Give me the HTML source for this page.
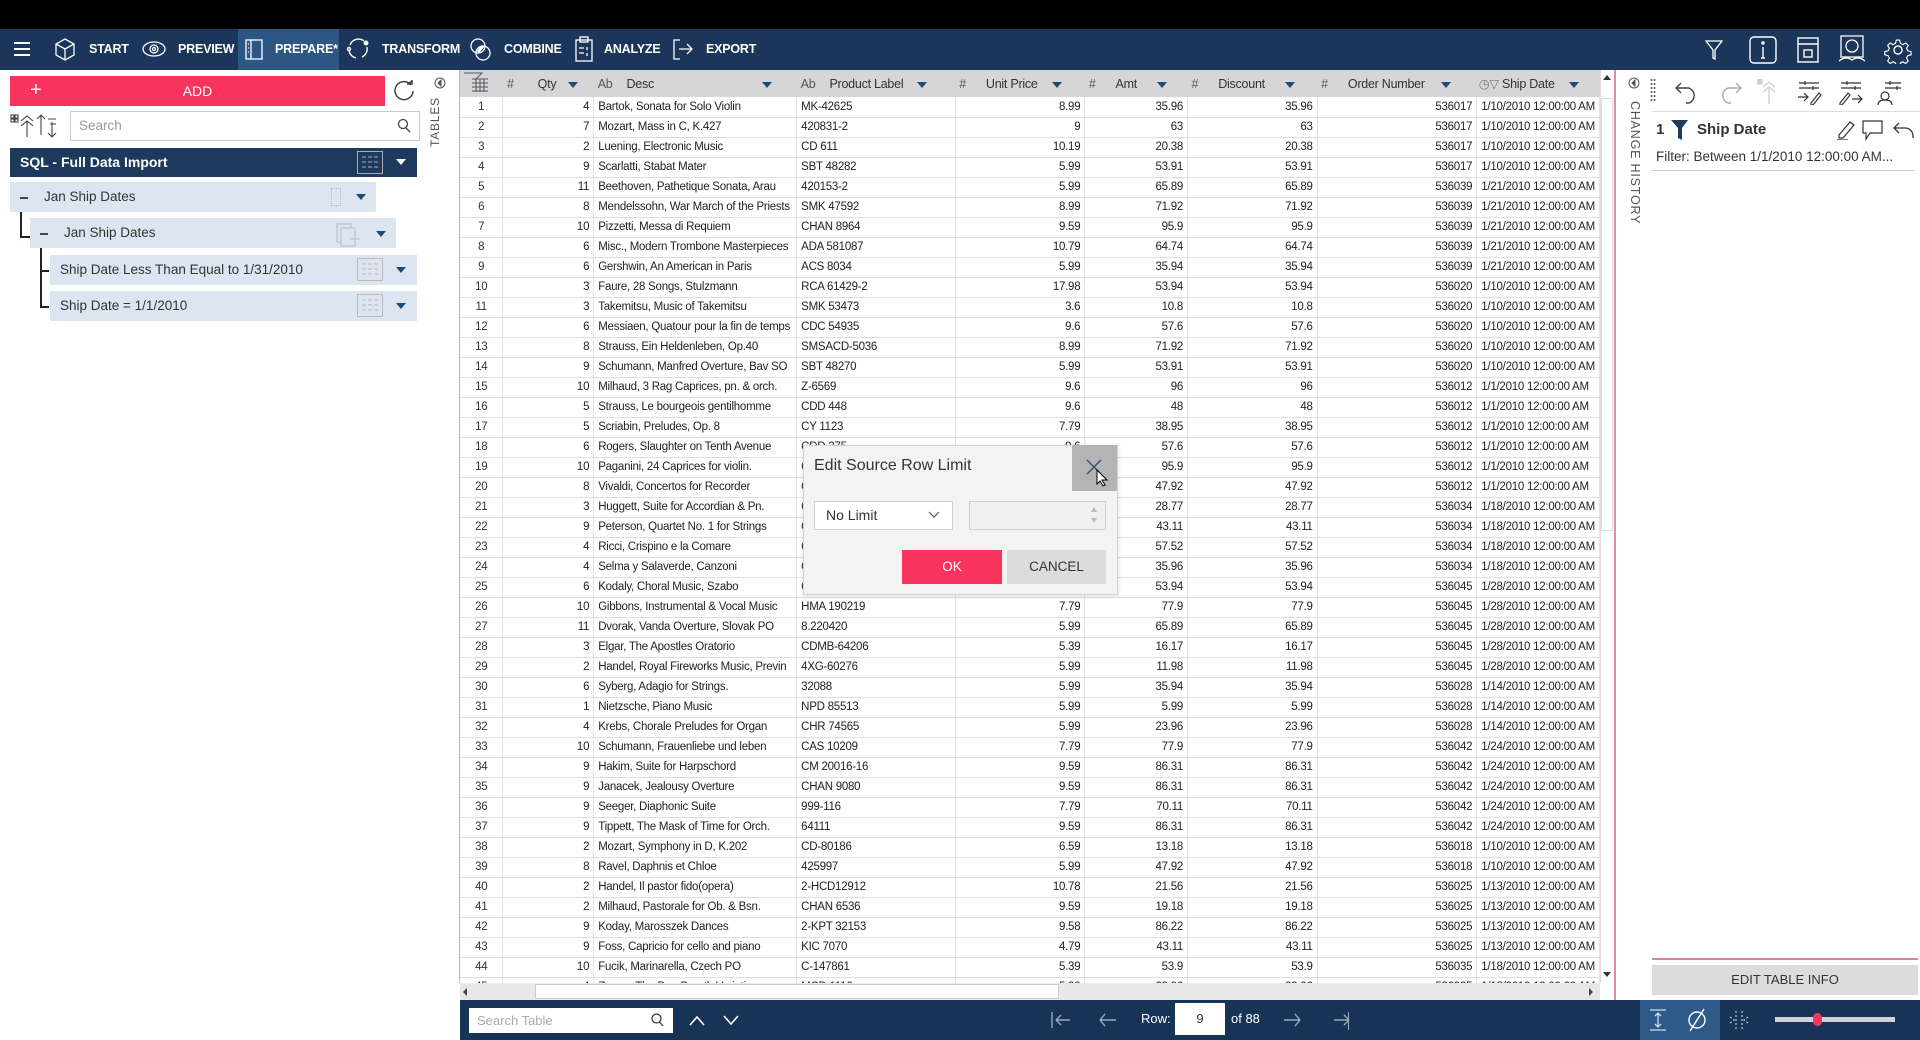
<!DOCTYPE html>
<html><head><meta charset="utf-8">
<style>
*{box-sizing:border-box;margin:0;padding:0}
body{width:1920px;height:1040px;overflow:hidden;background:#fff;font-family:"Liberation Sans",sans-serif;position:relative;color:#333}
.abs{position:absolute}
#top{left:0;top:0;width:1920px;height:29px;background:#000}
#nav{left:0;top:29px;width:1920px;height:41px;background:#1b365a;color:#fff}
.nv{position:absolute;top:0;height:41px;line-height:41px;font-size:12.5px;font-weight:bold;letter-spacing:-0.2px}
.nav-ic{position:absolute;top:9px}
#grid{left:459px;top:70px;width:1141px;height:913px;overflow:hidden;border-left:1px solid #e9a0b4}
table{border-collapse:collapse;table-layout:fixed;font-size:11.5px;letter-spacing:-0.25px;color:#222}
td{height:20px;border-bottom:1px solid #dedede;border-right:1px solid #e3e3e3;white-space:nowrap;overflow:hidden;padding:0 4px}
td.r{text-align:right}
td.c{text-align:center;color:#333}
thead td{height:23px;background:#d6d6d6;color:#333;font-size:12.5px;border-right:none;border-bottom:none}
.tri{display:inline-block;width:0;height:0;border-left:5px solid transparent;border-right:5px solid transparent;border-top:6px solid #1b4b7a}
.panel{position:absolute;background:#dde6f0;height:30px;line-height:30px;font-size:13.5px;color:#333}
</style></head><body>
<div id="top" class="abs"></div>
<div id="nav" class="abs">
  <svg class="nav-ic" style="left:14px;top:13px" width="16" height="15"><path d="M0 1h16M0 7h16M0 13h16" stroke="#fff" stroke-width="2"/></svg>
  <svg class="nav-ic" style="left:55px" width="20" height="23" fill="none" stroke="#fff" stroke-width="1.3"><path d="M10 1L19 6V17L10 22L1 17V6Z M1 6L10 11L19 6 M10 11V22"/></svg>
  <div class="nv" style="left:89px">START</div>
  <svg class="nav-ic" style="left:142px;top:11px" width="24" height="18" fill="none" stroke="#fff" stroke-width="1.3"><ellipse cx="12" cy="9" rx="11" ry="7"/><circle cx="12" cy="9" r="4"/><circle cx="12" cy="9" r="1.5"/></svg>
  <div class="nv" style="left:178px">PREVIEW</div>
  <div class="abs" style="left:238px;top:0;width:101px;height:41px;background:#2c5785"></div>
  <svg class="nav-ic" style="left:245px;top:10px" width="18" height="21" fill="none" stroke="#fff" stroke-width="1.3"><rect x="1" y="1" width="16" height="19"/><path d="M6 1V20M3 5h1M3 9h1M3 13h1"/></svg>
  <div class="nv" style="left:275px">PREPARE*</div>
  <svg class="nav-ic" style="left:346px;top:8px" width="24" height="24" fill="none" stroke="#fff" stroke-width="1.4"><path d="M4 8A9 9 0 0 1 18 4M21 10A9 9 0 0 1 16 20M10 21A9 9 0 0 1 3 14"/><circle cx="20" cy="6" r="1.8" fill="#fff"/><circle cx="3" cy="12" r="1.5"/></svg>
  <div class="nv" style="left:382px">TRANSFORM</div>
  <svg class="nav-ic" style="left:469px;top:8px" width="24" height="26" fill="none" stroke="#fff" stroke-width="1.3"><circle cx="9" cy="9" r="7"/><circle cx="14" cy="16" r="7"/><path d="M9 15L14 9" stroke-width="3"/></svg>
  <div class="nv" style="left:504px">COMBINE</div>
  <svg class="nav-ic" style="left:575px;top:7px" width="18" height="26" fill="none" stroke="#fff" stroke-width="1.3"><rect x="1" y="4" width="16" height="21"/><rect x="5" y="1" width="8" height="5"/><path d="M4 12h5M4 17h5M12 11v3M12 17v3"/></svg>
  <div class="nv" style="left:604px">ANALYZE</div>
  <svg class="nav-ic" style="left:673px;top:10px" width="20" height="21" fill="none" stroke="#fff" stroke-width="1.3"><path d="M7 1H1V20H7M6 10H19M14 5L19 10L14 15"/></svg>
  <div class="nv" style="left:706px">EXPORT</div>
  <svg class="nav-ic" style="left:1705px;top:11px" width="18" height="20" fill="none" stroke="#fff" stroke-width="1.3"><path d="M1 1H17L10 10V19L8 18V10Z"/></svg>
  <svg class="nav-ic" style="left:1749px;top:7px" width="28" height="28" fill="none" stroke="#fff" stroke-width="1.4"><rect x="1" y="1" width="26" height="26" rx="4"/><path d="M14 11V22M12 22h4"/><circle cx="14" cy="7" r="1" fill="#fff"/></svg>
  <svg class="nav-ic" style="left:1797px;top:8px" width="22" height="26" fill="none" stroke="#fff" stroke-width="1.4"><rect x="1" y="1" width="20" height="24"/><path d="M1 7H21"/><rect x="7" y="13" width="8" height="7"/></svg>
  <svg class="nav-ic" style="left:1838px;top:6px" width="28" height="28" fill="none" stroke="#fff" stroke-width="1.3"><path d="M3 1H25V22H3Z M1 26C6 22 10 22 14 25C18 22 22 22 27 26"/><circle cx="14" cy="11" r="6"/></svg>
  <svg class="nav-ic" style="left:1884px;top:7px" width="28" height="28" fill="none" stroke="#fff" stroke-width="1.4"><circle cx="14" cy="14" r="4"/><path d="M12 2h4l1 4 3 1.5 3.5-2 3 3-2 3.5 1.5 3 4 1v4l-4 1-1.5 3 2 3.5-3 3-3.5-2-3 1.5-1 4h-4l-1-4-3-1.5-3.5 2-3-3 2-3.5-1.5-3-4-1v-4l4-1 1.5-3-2-3.5 3-3 3.5 2 3-1.5z" transform="scale(0.82) translate(3 3)"/></svg>
</div>

<!-- LEFT PANEL -->
<div class="abs" style="left:10px;top:76px;width:375px;height:30px;background:#f8345e;color:#fff;font-size:14px;line-height:30px;text-align:center">ADD</div>
<div class="abs" style="left:30px;top:80px;color:#fff;font-size:20px;font-weight:200;line-height:20px">+</div>
<svg class="abs" style="left:392px;top:79px" width="24" height="24" fill="none" stroke="#444" stroke-width="1.5"><path d="M19 6A9 9 0 1 0 21 12"/><path d="M15 5L20 5L20 1" fill="#444"/></svg>
<svg class="abs" style="left:434px;top:77px" width="12" height="12" fill="none" stroke="#555"><circle cx="6" cy="6" r="5"/><path d="M7 3L4 6L7 9Z" fill="#555"/></svg>
<div class="abs" style="left:428px;top:147px;transform:rotate(-90deg);transform-origin:left top;font-size:12px;color:#555;letter-spacing:0.8px">TABLES</div>
<svg class="abs" style="left:10px;top:113px" width="56" height="26" fill="none" stroke="#444" stroke-width="1.1"><rect x="1" y="2" width="3" height="3"/><rect x="5" y="2" width="3" height="3"/><rect x="1" y="6" width="3" height="3"/><rect x="5" y="6" width="3" height="3"/><path d="M11 8L17 3L23 8M11 13L17 8L23 13M17 8V24M31 2V22M27 6L31 2L35 6M38 6H46M40 11H46M42 9V24M38 20L42 24L46 20"/></svg>
<div class="abs" style="left:70px;top:111px;width:350px;height:30px;border:1px solid #ccc;background:#fff;font-size:13.5px;color:#999;line-height:28px;padding-left:8px">Search</div>
<svg class="abs" style="left:397px;top:118px" width="14" height="15" fill="none" stroke="#444" stroke-width="1.3"><circle cx="6" cy="6" r="4.5"/><path d="M9 10L13 14"/></svg>
<div class="abs" style="left:10px;top:148px;width:407px;height:29px;background:#1d3a5d;color:#fff;font-weight:bold;font-size:14px;line-height:29px;padding-left:10px">SQL - Full Data Import</div>
<svg class="abs" style="left:357px;top:151px" width="26" height="23" fill="none" stroke="#aab" stroke-width="1"><rect x="0.5" y="0.5" width="25" height="22"/><path d="M5 6h4M11 6h4M17 6h4M5 11h4M11 11h4M17 11h4M5 16h4M11 16h4M17 16h4"/></svg>
<div class="abs tri" style="left:396px;top:159px;border-top-color:#fff"></div>

<div class="panel" style="left:10px;top:182px;width:366px;padding-left:34px">Jan Ship Dates</div>
<div class="abs" style="left:20px;top:197px;width:8px;height:1.5px;background:#444"></div>
<div class="abs" style="left:331px;top:188px;width:10px;height:18px;border:1px dotted #bbb"></div>
<div class="abs tri" style="left:356px;top:194px"></div>
<div class="abs" style="left:20px;top:212px;width:1.5px;height:25px;background:#222"></div>
<div class="abs" style="left:20px;top:236px;width:10px;height:1.5px;background:#222"></div>
<div class="panel" style="left:30px;top:218px;width:366px;padding-left:34px">Jan Ship Dates</div>
<div class="abs" style="left:40px;top:233px;width:8px;height:1.5px;background:#444"></div>
<svg class="abs" style="left:336px;top:223px" width="26" height="26" fill="none" stroke="#bbb" stroke-width="1"><rect x="1" y="1" width="14" height="18"/><rect x="5" y="5" width="14" height="18" fill="#dde6f0"/><path d="M14 16h10M19 11v10"/></svg>
<div class="abs tri" style="left:376px;top:231px"></div>
<div class="abs" style="left:40px;top:248px;width:1.5px;height:59px;background:#222"></div>
<div class="abs" style="left:40px;top:270px;width:9px;height:1.5px;background:#222"></div>
<div class="abs" style="left:40px;top:306px;width:9px;height:1.5px;background:#222"></div>
<div class="panel" style="left:50px;top:255px;width:367px;padding-left:10px">Ship Date Less Than Equal to 1/31/2010</div>
<div class="panel" style="left:50px;top:291px;width:367px;padding-left:10px">Ship Date = 1/1/2010</div>
<svg class="abs" style="left:357px;top:258px" width="26" height="23" fill="none" stroke="#bbb"><rect x="0.5" y="0.5" width="25" height="22"/><path d="M5 6h4M11 6h4M17 6h4M5 11h4M11 11h4M17 11h4M5 16h4M11 16h4M17 16h4"/></svg>
<svg class="abs" style="left:357px;top:294px" width="26" height="23" fill="none" stroke="#bbb"><rect x="0.5" y="0.5" width="25" height="22"/><path d="M5 6h4M11 6h4M17 6h4M5 11h4M11 11h4M17 11h4M5 16h4M11 16h4M17 16h4"/></svg>
<div class="abs tri" style="left:396px;top:267px"></div>
<div class="abs tri" style="left:396px;top:303px"></div>

<!-- GRID -->
<div id="grid" class="abs">
<table>
<colgroup><col style="width:43px"><col style="width:91px"><col style="width:203px"><col style="width:159px"><col style="width:130px"><col style="width:103px"><col style="width:130px"><col style="width:160px"><col style="width:122px"></colgroup>
<thead><tr>
<td style="padding:0"><svg width="40" height="24" fill="none" stroke="#556" stroke-width="1"><path d="M4 3H22L15 10"/><path d="M12 9h16M12 13h16M12 17h16M12 21h16M16 9v13M20 9v13M24 9v13"/></svg></td>
<td><span style="color:#555">#</span><span style="margin-left:24px">Qty</span><span class="tri" style="margin-left:12px"></span></td>
<td><span style="color:#555">Ab</span><span style="margin-left:14px">Desc</span><span class="tri" style="margin-left:108px"></span></td>
<td><span style="color:#555">Ab</span><span style="margin-left:14px">Product Label</span><span class="tri" style="margin-left:14px"></span></td>
<td><span style="color:#555">#</span><span style="margin-left:20px">Unit Price</span><span class="tri" style="margin-left:14px"></span></td>
<td><span style="color:#555">#</span><span style="margin-left:20px">Amt</span><span class="tri" style="margin-left:20px"></span></td>
<td><span style="color:#555">#</span><span style="margin-left:20px">Discount</span><span class="tri" style="margin-left:20px"></span></td>
<td><span style="color:#555">#</span><span style="margin-left:20px">Order Number</span><span class="tri" style="margin-left:16px"></span></td>
<td style="padding-left:2px"><span style="color:#777">&#9719;&#9661;</span> Ship Date<span class="tri" style="margin-left:14px"></span></td>
</tr></thead>
<tbody>
<tr><td class="c">1</td><td class="r">4</td><td>Bartok, Sonata for Solo Violin</td><td>MK-42625</td><td class="r">8.99</td><td class="r">35.96</td><td class="r">35.96</td><td class="r">536017</td><td>1/10/2010 12:00:00 AM</td></tr>
<tr><td class="c">2</td><td class="r">7</td><td>Mozart, Mass in C, K.427</td><td>420831-2</td><td class="r">9</td><td class="r">63</td><td class="r">63</td><td class="r">536017</td><td>1/10/2010 12:00:00 AM</td></tr>
<tr><td class="c">3</td><td class="r">2</td><td>Luening, Electronic Music</td><td>CD 611</td><td class="r">10.19</td><td class="r">20.38</td><td class="r">20.38</td><td class="r">536017</td><td>1/10/2010 12:00:00 AM</td></tr>
<tr><td class="c">4</td><td class="r">9</td><td>Scarlatti, Stabat Mater</td><td>SBT 48282</td><td class="r">5.99</td><td class="r">53.91</td><td class="r">53.91</td><td class="r">536017</td><td>1/10/2010 12:00:00 AM</td></tr>
<tr><td class="c">5</td><td class="r">11</td><td>Beethoven, Pathetique Sonata, Arau</td><td>420153-2</td><td class="r">5.99</td><td class="r">65.89</td><td class="r">65.89</td><td class="r">536039</td><td>1/21/2010 12:00:00 AM</td></tr>
<tr><td class="c">6</td><td class="r">8</td><td>Mendelssohn, War March of the Priests</td><td>SMK 47592</td><td class="r">8.99</td><td class="r">71.92</td><td class="r">71.92</td><td class="r">536039</td><td>1/21/2010 12:00:00 AM</td></tr>
<tr><td class="c">7</td><td class="r">10</td><td>Pizzetti, Messa di Requiem</td><td>CHAN 8964</td><td class="r">9.59</td><td class="r">95.9</td><td class="r">95.9</td><td class="r">536039</td><td>1/21/2010 12:00:00 AM</td></tr>
<tr><td class="c">8</td><td class="r">6</td><td>Misc., Modern Trombone Masterpieces</td><td>ADA 581087</td><td class="r">10.79</td><td class="r">64.74</td><td class="r">64.74</td><td class="r">536039</td><td>1/21/2010 12:00:00 AM</td></tr>
<tr><td class="c">9</td><td class="r">6</td><td>Gershwin, An American in Paris</td><td>ACS 8034</td><td class="r">5.99</td><td class="r">35.94</td><td class="r">35.94</td><td class="r">536039</td><td>1/21/2010 12:00:00 AM</td></tr>
<tr><td class="c">10</td><td class="r">3</td><td>Faure, 28 Songs, Stulzmann</td><td>RCA 61429-2</td><td class="r">17.98</td><td class="r">53.94</td><td class="r">53.94</td><td class="r">536020</td><td>1/10/2010 12:00:00 AM</td></tr>
<tr><td class="c">11</td><td class="r">3</td><td>Takemitsu, Music of Takemitsu</td><td>SMK 53473</td><td class="r">3.6</td><td class="r">10.8</td><td class="r">10.8</td><td class="r">536020</td><td>1/10/2010 12:00:00 AM</td></tr>
<tr><td class="c">12</td><td class="r">6</td><td>Messiaen, Quatour pour la fin de temps</td><td>CDC 54935</td><td class="r">9.6</td><td class="r">57.6</td><td class="r">57.6</td><td class="r">536020</td><td>1/10/2010 12:00:00 AM</td></tr>
<tr><td class="c">13</td><td class="r">8</td><td>Strauss, Ein Heldenleben, Op.40</td><td>SMSACD-5036</td><td class="r">8.99</td><td class="r">71.92</td><td class="r">71.92</td><td class="r">536020</td><td>1/10/2010 12:00:00 AM</td></tr>
<tr><td class="c">14</td><td class="r">9</td><td>Schumann, Manfred Overture, Bav SO</td><td>SBT 48270</td><td class="r">5.99</td><td class="r">53.91</td><td class="r">53.91</td><td class="r">536020</td><td>1/10/2010 12:00:00 AM</td></tr>
<tr><td class="c">15</td><td class="r">10</td><td>Milhaud, 3 Rag Caprices, pn. &amp; orch.</td><td>Z-6569</td><td class="r">9.6</td><td class="r">96</td><td class="r">96</td><td class="r">536012</td><td>1/1/2010 12:00:00 AM</td></tr>
<tr><td class="c">16</td><td class="r">5</td><td>Strauss, Le bourgeois gentilhomme</td><td>CDD 448</td><td class="r">9.6</td><td class="r">48</td><td class="r">48</td><td class="r">536012</td><td>1/1/2010 12:00:00 AM</td></tr>
<tr><td class="c">17</td><td class="r">5</td><td>Scriabin, Preludes, Op. 8</td><td>CY 1123</td><td class="r">7.79</td><td class="r">38.95</td><td class="r">38.95</td><td class="r">536012</td><td>1/1/2010 12:00:00 AM</td></tr>
<tr><td class="c">18</td><td class="r">6</td><td>Rogers, Slaughter on Tenth Avenue</td><td>CDD 275</td><td class="r">9.6</td><td class="r">57.6</td><td class="r">57.6</td><td class="r">536012</td><td>1/1/2010 12:00:00 AM</td></tr>
<tr><td class="c">19</td><td class="r">10</td><td>Paganini, 24 Caprices for violin.</td><td>CDD 276</td><td class="r">9.59</td><td class="r">95.9</td><td class="r">95.9</td><td class="r">536012</td><td>1/1/2010 12:00:00 AM</td></tr>
<tr><td class="c">20</td><td class="r">8</td><td>Vivaldi, Concertos for Recorder</td><td>CDD 277</td><td class="r">5.99</td><td class="r">47.92</td><td class="r">47.92</td><td class="r">536012</td><td>1/1/2010 12:00:00 AM</td></tr>
<tr><td class="c">21</td><td class="r">3</td><td>Huggett, Suite for Accordian &amp; Pn.</td><td>CDD 278</td><td class="r">9.59</td><td class="r">28.77</td><td class="r">28.77</td><td class="r">536034</td><td>1/18/2010 12:00:00 AM</td></tr>
<tr><td class="c">22</td><td class="r">9</td><td>Peterson, Quartet No. 1 for Strings</td><td>CDD 279</td><td class="r">4.79</td><td class="r">43.11</td><td class="r">43.11</td><td class="r">536034</td><td>1/18/2010 12:00:00 AM</td></tr>
<tr><td class="c">23</td><td class="r">4</td><td>Ricci, Crispino e la Comare</td><td>CDD 280</td><td class="r">14.38</td><td class="r">57.52</td><td class="r">57.52</td><td class="r">536034</td><td>1/18/2010 12:00:00 AM</td></tr>
<tr><td class="c">24</td><td class="r">4</td><td>Selma y Salaverde, Canzoni</td><td>CDD 281</td><td class="r">8.99</td><td class="r">35.96</td><td class="r">35.96</td><td class="r">536034</td><td>1/18/2010 12:00:00 AM</td></tr>
<tr><td class="c">25</td><td class="r">6</td><td>Kodaly, Choral Music, Szabo</td><td>CDD 282</td><td class="r">8.99</td><td class="r">53.94</td><td class="r">53.94</td><td class="r">536045</td><td>1/28/2010 12:00:00 AM</td></tr>
<tr><td class="c">26</td><td class="r">10</td><td>Gibbons, Instrumental &amp; Vocal Music</td><td>HMA 190219</td><td class="r">7.79</td><td class="r">77.9</td><td class="r">77.9</td><td class="r">536045</td><td>1/28/2010 12:00:00 AM</td></tr>
<tr><td class="c">27</td><td class="r">11</td><td>Dvorak, Vanda Overture, Slovak PO</td><td>8.220420</td><td class="r">5.99</td><td class="r">65.89</td><td class="r">65.89</td><td class="r">536045</td><td>1/28/2010 12:00:00 AM</td></tr>
<tr><td class="c">28</td><td class="r">3</td><td>Elgar, The Apostles Oratorio</td><td>CDMB-64206</td><td class="r">5.39</td><td class="r">16.17</td><td class="r">16.17</td><td class="r">536045</td><td>1/28/2010 12:00:00 AM</td></tr>
<tr><td class="c">29</td><td class="r">2</td><td>Handel, Royal Fireworks Music, Previn</td><td>4XG-60276</td><td class="r">5.99</td><td class="r">11.98</td><td class="r">11.98</td><td class="r">536045</td><td>1/28/2010 12:00:00 AM</td></tr>
<tr><td class="c">30</td><td class="r">6</td><td>Syberg, Adagio for Strings.</td><td>32088</td><td class="r">5.99</td><td class="r">35.94</td><td class="r">35.94</td><td class="r">536028</td><td>1/14/2010 12:00:00 AM</td></tr>
<tr><td class="c">31</td><td class="r">1</td><td>Nietzsche, Piano Music</td><td>NPD 85513</td><td class="r">5.99</td><td class="r">5.99</td><td class="r">5.99</td><td class="r">536028</td><td>1/14/2010 12:00:00 AM</td></tr>
<tr><td class="c">32</td><td class="r">4</td><td>Krebs, Chorale Preludes for Organ</td><td>CHR 74565</td><td class="r">5.99</td><td class="r">23.96</td><td class="r">23.96</td><td class="r">536028</td><td>1/14/2010 12:00:00 AM</td></tr>
<tr><td class="c">33</td><td class="r">10</td><td>Schumann, Frauenliebe und leben</td><td>CAS 10209</td><td class="r">7.79</td><td class="r">77.9</td><td class="r">77.9</td><td class="r">536042</td><td>1/24/2010 12:00:00 AM</td></tr>
<tr><td class="c">34</td><td class="r">9</td><td>Hakim, Suite for Harpschord</td><td>CM 20016-16</td><td class="r">9.59</td><td class="r">86.31</td><td class="r">86.31</td><td class="r">536042</td><td>1/24/2010 12:00:00 AM</td></tr>
<tr><td class="c">35</td><td class="r">9</td><td>Janacek, Jealousy Overture</td><td>CHAN 9080</td><td class="r">9.59</td><td class="r">86.31</td><td class="r">86.31</td><td class="r">536042</td><td>1/24/2010 12:00:00 AM</td></tr>
<tr><td class="c">36</td><td class="r">9</td><td>Seeger, Diaphonic Suite</td><td>999-116</td><td class="r">7.79</td><td class="r">70.11</td><td class="r">70.11</td><td class="r">536042</td><td>1/24/2010 12:00:00 AM</td></tr>
<tr><td class="c">37</td><td class="r">9</td><td>Tippett, The Mask of Time for Orch.</td><td>64111</td><td class="r">9.59</td><td class="r">86.31</td><td class="r">86.31</td><td class="r">536042</td><td>1/24/2010 12:00:00 AM</td></tr>
<tr><td class="c">38</td><td class="r">2</td><td>Mozart, Symphony in D, K.202</td><td>CD-80186</td><td class="r">6.59</td><td class="r">13.18</td><td class="r">13.18</td><td class="r">536018</td><td>1/10/2010 12:00:00 AM</td></tr>
<tr><td class="c">39</td><td class="r">8</td><td>Ravel, Daphnis et Chloe</td><td>425997</td><td class="r">5.99</td><td class="r">47.92</td><td class="r">47.92</td><td class="r">536018</td><td>1/10/2010 12:00:00 AM</td></tr>
<tr><td class="c">40</td><td class="r">2</td><td>Handel, Il pastor fido(opera)</td><td>2-HCD12912</td><td class="r">10.78</td><td class="r">21.56</td><td class="r">21.56</td><td class="r">536025</td><td>1/13/2010 12:00:00 AM</td></tr>
<tr><td class="c">41</td><td class="r">2</td><td>Milhaud, Pastorale for Ob. &amp; Bsn.</td><td>CHAN 6536</td><td class="r">9.59</td><td class="r">19.18</td><td class="r">19.18</td><td class="r">536025</td><td>1/13/2010 12:00:00 AM</td></tr>
<tr><td class="c">42</td><td class="r">9</td><td>Koday, Marosszek Dances</td><td>2-KPT 32153</td><td class="r">9.58</td><td class="r">86.22</td><td class="r">86.22</td><td class="r">536025</td><td>1/13/2010 12:00:00 AM</td></tr>
<tr><td class="c">43</td><td class="r">9</td><td>Foss, Capricio for cello and piano</td><td>KIC 7070</td><td class="r">4.79</td><td class="r">43.11</td><td class="r">43.11</td><td class="r">536025</td><td>1/13/2010 12:00:00 AM</td></tr>
<tr><td class="c">44</td><td class="r">10</td><td>Fucik, Marinarella, Czech PO</td><td>C-147861</td><td class="r">5.39</td><td class="r">53.9</td><td class="r">53.9</td><td class="r">536035</td><td>1/18/2010 12:00:00 AM</td></tr>
<tr><td class="c">45</td><td class="r">4</td><td>Zappa, The Dog Breath Variations</td><td>MCD 1116</td><td class="r">5.99</td><td class="r">23.96</td><td class="r">23.96</td><td class="r">536035</td><td>1/18/2010 12:00:00 AM</td></tr>
</tbody></table>
</div>
<!-- vertical scrollbar -->
<div class="abs" style="left:1600px;top:70px;width:14px;height:913px;background:#fff;border-left:1px solid #ddd"></div>
<div class="abs" style="left:1603px;top:75px;width:0;height:0;border-left:4px solid transparent;border-right:4px solid transparent;border-bottom:5px solid #333"></div>
<div class="abs" style="left:1601px;top:98px;width:12px;height:433px;background:#fff;border:1px solid #ddd"></div>
<div class="abs" style="left:1603px;top:972px;width:0;height:0;border-left:4px solid transparent;border-right:4px solid transparent;border-top:5px solid #333"></div>
<!-- horizontal scrollbar -->
<div class="abs" style="left:460px;top:983px;width:1140px;height:17px;background:#e8e8e8"></div>
<div class="abs" style="left:535px;top:984px;width:524px;height:15px;background:#fff;border:1px solid #ccc"></div>
<div class="abs" style="left:463px;top:988px;width:0;height:0;border-top:4px solid transparent;border-bottom:4px solid transparent;border-right:4px solid #444"></div>
<div class="abs" style="left:1589px;top:988px;width:0;height:0;border-top:4px solid transparent;border-bottom:4px solid transparent;border-left:4px solid #444"></div>

<!-- RIGHT PANEL -->
<div class="abs" style="left:1614px;top:70px;width:2px;height:930px;background:#e78aa5"></div>
<svg class="abs" style="left:1628px;top:77px" width="12" height="12" fill="none" stroke="#555"><circle cx="6" cy="6" r="5"/><path d="M7 3L4 6L7 9Z" fill="#555"/></svg>
<div class="abs" style="left:1642px;top:101px;transform:rotate(90deg);transform-origin:left top;font-size:12.5px;color:#555;letter-spacing:0.8px;white-space:nowrap">CHANGE HISTORY</div>
<svg class="abs" style="left:1650px;top:78px" width="6" height="26" fill="#555"><circle cx="1.5" cy="2" r="1"/><circle cx="4.5" cy="2" r="1"/><circle cx="1.5" cy="6" r="1"/><circle cx="4.5" cy="6" r="1"/><circle cx="1.5" cy="10" r="1"/><circle cx="4.5" cy="10" r="1"/><circle cx="1.5" cy="14" r="1"/><circle cx="4.5" cy="14" r="1"/><circle cx="1.5" cy="18" r="1"/><circle cx="4.5" cy="18" r="1"/><circle cx="1.5" cy="22" r="1"/><circle cx="4.5" cy="22" r="1"/></svg>
<svg class="abs" style="left:1675px;top:80px" width="26" height="24" fill="none" stroke="#444" stroke-width="1.4"><path d="M6 3L1 8L6 13M1 8H14A8 8 0 0 1 14 23H11"/></svg>
<svg class="abs" style="left:1716px;top:80px" width="26" height="24" fill="none" stroke="#aaa" stroke-width="1.4"><path d="M20 3L25 8L20 13M25 8H12A8 8 0 0 0 12 23H15"/></svg>
<svg class="abs" style="left:1757px;top:79px" width="20" height="26" fill="none" stroke="#ccc" stroke-width="1.2"><path d="M6 8L12 3L18 8M6 13L12 8L18 13M12 8V25"/><rect x="0" y="0" width="2" height="2"/><rect x="3" y="0" width="2" height="2"/><rect x="0" y="3" width="2" height="2"/><rect x="3" y="3" width="2" height="2"/></svg>
<svg class="abs" style="left:1796px;top:79px" width="26" height="26" fill="none" stroke="#333" stroke-width="1.2"><path d="M3 4h20M3 9h20M9 2v4M17 7v4M2 18h10M8 14l4 4-4 4M15 24l8-10 2 2-8 10h-2z"/></svg>
<svg class="abs" style="left:1838px;top:79px" width="26" height="26" fill="none" stroke="#333" stroke-width="1.2"><path d="M3 4h20M3 9h20M9 2v4M17 7v4M2 24l8-10 2 2-8 10H2zM14 20h10M20 16l4 4-4 4"/></svg>
<svg class="abs" style="left:1877px;top:79px" width="26" height="26" fill="none" stroke="#333" stroke-width="1.2"><path d="M8 4h16M8 9h16M13 2v4M20 7v4"/><circle cx="8" cy="17" r="4"/><path d="M1 26C1 22 4 21 8 21S15 22 15 26"/></svg>
<div class="abs" style="left:1652px;top:111px;width:268px;height:1px;background:#ddd"></div>
<div class="abs" style="left:1656px;top:121px;font-size:15px;font-weight:bold;color:#333">1</div>
<svg class="abs" style="left:1671px;top:119px" width="17" height="22"><path d="M0 1H17L11 9V21L7 19V9Z" fill="#1c3b5e"/></svg>
<div class="abs" style="left:1697px;top:121px;font-size:15px;font-weight:bold;color:#333">Ship Date</div>
<svg class="abs" style="left:1836px;top:120px" width="20" height="20" fill="none" stroke="#333" stroke-width="1.2"><path d="M3 15L14 2L18 5L7 18H3ZM1 20H12"/></svg>
<svg class="abs" style="left:1862px;top:120px" width="22" height="22" fill="none" stroke="#333" stroke-width="1.2"><path d="M1 1H20V13H8L4 19V13H1Z"/></svg>
<svg class="abs" style="left:1893px;top:121px" width="22" height="18" fill="none" stroke="#333" stroke-width="1.3"><path d="M6 2L1 7L6 12M1 7H12A8 8 0 0 1 20 15V17"/></svg>
<div class="abs" style="left:1656px;top:149px;font-size:13.5px;color:#333">Filter: Between 1/1/2010 12:00:00 AM...</div>
<div class="abs" style="left:1652px;top:170px;width:263px;height:1px;background:#ccc"></div>
<div class="abs" style="left:1652px;top:958px;width:266px;height:2px;background:#d9839d"></div>
<div class="abs" style="left:1652px;top:965px;width:266px;height:30px;background:#dcdcdc;font-size:13px;line-height:30px;text-align:center;color:#333">EDIT TABLE INFO</div>

<!-- BOTTOM BAR -->
<div class="abs" style="left:460px;top:1000px;width:1460px;height:40px;background:#173356"></div>
<div class="abs" style="left:469px;top:1008px;width:204px;height:25px;background:#fff;font-size:13px;color:#aaa;line-height:25px;padding-left:8px">Search Table</div>
<svg class="abs" style="left:651px;top:1013px" width="13" height="14" fill="none" stroke="#333" stroke-width="1.2"><circle cx="5.5" cy="5.5" r="4.5"/><path d="M8.5 9L12 13"/></svg>
<svg class="abs" style="left:688px;top:1012px" width="70" height="16" fill="none" stroke="#fff" stroke-width="1.6"><path d="M2 13L9 5L16 13M36 4L43 12L50 4"/></svg>
<svg class="abs" style="left:1050px;top:1011px" width="300" height="18" fill="none" stroke="#9ab" stroke-width="1.4"><path d="M2 1V17M6 9H20M6 9L11 4M6 9L11 14M50 9H66M50 9L55 3M50 9L55 15"/><path d="M234 9H250M250 9L245 3M250 9L245 15M284 9H299M299 9L294 4M299 9L294 14"/></svg>
<div class="abs" style="left:1348px;top:1012px;width:1.4px;height:18px;background:#9ab"></div>
<div class="abs" style="left:1141px;top:1011px;font-size:13px;color:#fff">Row:</div>
<div class="abs" style="left:1175px;top:1003px;width:50px;height:32px;background:#fff;font-size:13px;line-height:32px;text-align:center;color:#333">9</div>
<div class="abs" style="left:1231px;top:1011px;font-size:13px;color:#fff">of 88</div>
<div class="abs" style="left:1640px;top:1000px;width:80px;height:40px;background:#2d5a89"></div>
<svg class="abs" style="left:1648px;top:1009px" width="20" height="22" fill="none" stroke="#cde" stroke-width="1.3"><path d="M2 1H18M2 21H18M10 4V18M7 7L10 4L13 7M7 15L10 18L13 15"/></svg>
<svg class="abs" style="left:1686px;top:1008px" width="22" height="24" fill="none" stroke="#fff" stroke-width="1.4"><circle cx="11" cy="12" r="8"/><path d="M4 23L18 1"/></svg>
<svg class="abs" style="left:1729px;top:1010px" width="20" height="20" fill="none" stroke="#bcd" stroke-width="1.2" stroke-dasharray="2 2"><path d="M7 1V19M13 1V19M1 7L5 10L1 13M19 7L15 10L19 13"/></svg>
<div class="abs" style="left:1775px;top:1017px;width:120px;height:5px;background:#d0d4da"></div>
<div class="abs" style="left:1813px;top:1013px;width:9px;height:13px;border-radius:5px;background:#f4385f"></div>

<!-- DIALOG -->
<div class="abs" style="left:803px;top:445px;width:315px;height:150px;background:#f3f3f3;border:1px solid #d4d4d4;box-shadow:0 1px 4px rgba(0,0,0,0.15)"></div>
<div class="abs" style="left:814px;top:457px;font-size:16px;color:#333">Edit Source Row Limit</div>
<div class="abs" style="left:1072px;top:445px;width:45px;height:46px;background:#b4b4b4"></div>
<svg class="abs" style="left:1086px;top:459px" width="16" height="16" fill="none" stroke="#2d4d73" stroke-width="1.3"><path d="M1 1L15 15M15 1L1 15"/></svg>
<svg class="abs" style="left:1096px;top:469px" width="12" height="18"><path d="M1 1V15L4 12L7 17L9 16L6 11H11Z" fill="#fff" stroke="#000" stroke-width="1"/></svg>
<div class="abs" style="left:814px;top:501px;width:139px;height:29px;background:#fff;border:1px solid #cfcfcf;font-size:14px;line-height:27px;padding-left:11px;color:#333">No Limit</div>
<svg class="abs" style="left:928px;top:511px" width="12" height="8" fill="none" stroke="#555" stroke-width="1.2"><path d="M1 1L6 6L11 1"/></svg>
<div class="abs" style="left:969px;top:501px;width:137px;height:29px;background:#f0f0f0;border:1px solid #cfcfcf"></div>
<div class="abs" style="left:1091px;top:507px;width:0;height:0;border-left:3px solid transparent;border-right:3px solid transparent;border-bottom:5px solid #bbb"></div>
<div class="abs" style="left:1091px;top:518px;width:0;height:0;border-left:3px solid transparent;border-right:3px solid transparent;border-top:5px solid #bbb"></div>
<div class="abs" style="left:902px;top:550px;width:100px;height:34px;background:#f8345e;color:#fff;font-size:13.5px;line-height:34px;text-align:center">OK</div>
<div class="abs" style="left:1007px;top:550px;width:99px;height:34px;background:#dcdcdc;color:#333;font-size:13.5px;line-height:34px;text-align:center">CANCEL</div>
</body></html>
